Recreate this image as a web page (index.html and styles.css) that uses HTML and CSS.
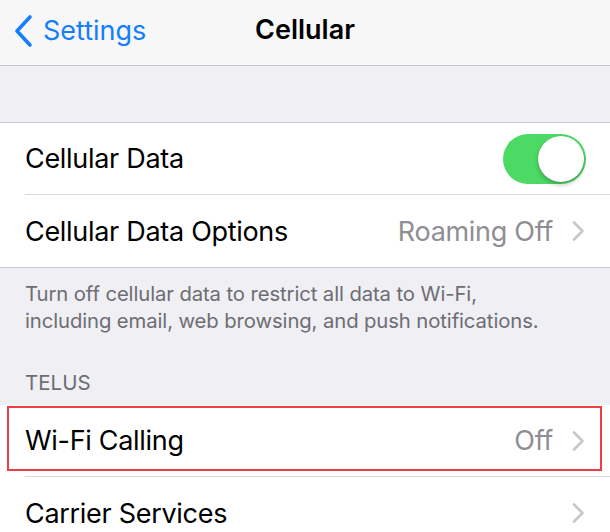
FILE: index.html
```html
<!DOCTYPE html>
<html>
<head>
<meta charset="utf-8">
<link rel="stylesheet" href="styles.css">
</head>
<body>
<div class="screen">
  <header class="nav">
    <div class="back">
      <svg class="back-icon" width="20" height="34" viewBox="0 0 20 34"><path d="M17 3 L4 17 L17 31" fill="none" stroke="#157efb" stroke-width="3.6" stroke-linecap="round" stroke-linejoin="round"/></svg>
      <span class="back-label">Settings</span>
    </div>
    <div class="title">Cellular</div>
  </header>
  <div class="spacer"></div>
  <section class="group">
    <div class="row">
      <span class="label">Cellular Data</span>
      <div class="toggle"><div class="knob"></div></div>
    </div>
    <div class="row">
      <span class="label">Cellular Data Options</span>
      <span class="value">Roaming Off</span>
      <svg class="chev" width="14" height="22" viewBox="0 0 14 22"><path d="M3 2.5 L11.5 11 L3 19.5" fill="none" stroke="#c7c7cc" stroke-width="2.6" stroke-linecap="round" stroke-linejoin="round"/></svg>
    </div>
  </section>
  <p class="footer">Turn off cellular data to restrict all data to Wi-Fi,<br>including email, web browsing, and push notifications.</p>
  <div class="header">TELUS</div>
  <section class="group">
    <div class="row highlighted">
      <span class="label">Wi-Fi Calling</span>
      <span class="value">Off</span>
      <svg class="chev" width="14" height="22" viewBox="0 0 14 22"><path d="M3 2.5 L11.5 11 L3 19.5" fill="none" stroke="#c7c7cc" stroke-width="2.6" stroke-linecap="round" stroke-linejoin="round"/></svg>
      <div class="highlight-box"></div>
    </div>
    <div class="row">
      <span class="label">Carrier Services</span>
      <svg class="chev" width="14" height="22" viewBox="0 0 14 22"><path d="M3 2.5 L11.5 11 L3 19.5" fill="none" stroke="#c7c7cc" stroke-width="2.6" stroke-linecap="round" stroke-linejoin="round"/></svg>
    </div>
  </section>
</div>
</body>
</html>
```
FILE: styles.css
```css
* { box-sizing: border-box; }
html, body { margin: 0; padding: 0; }
body {
  width: 610px;
  height: 532px;
  overflow: hidden;
  background: #efeff4;
  font-family: Inter, "Liberation Sans", sans-serif;
  -webkit-font-smoothing: antialiased;
}
.screen { display: flex; flex-direction: column; }
.nav {
  height: 66px;
  background: #f7f7f8;
  border-bottom: 1px solid #c9c9cd;
  display: flex;
  align-items: center;
  position: relative;
}
.back {
  display: flex;
  align-items: center;
  gap: 10px;
  padding-left: 13px;
  color: #157efb;
  font-size: 27px;
  margin-top: -4px;
}
.title {
  position: absolute;
  left: 0; right: 0;
  top: 13px;
  text-align: center;
  font-size: 27px;
  font-weight: 600;
  color: #000;
}
.spacer {
  height: 57px;
  border-bottom: 1px solid #c8c7cc;
}
.group {
  background: #fff;
  border-bottom: 1px solid #c8c7cc;
}
.row {
  height: 72px;
  display: flex;
  align-items: center;
  padding: 0 25px 0 0;
  margin-left: 25px;
  border-bottom: 1px solid #d9d9dd;
  position: relative;
  font-size: 27px;
  letter-spacing: -0.3px;
}
.row:last-child { border-bottom: none; }
.label { color: #000; flex: 1; }
.value { color: #8e8e93; margin-right: 18px; }
.chev { flex: none; }
.toggle {
  width: 83px;
  height: 50px;
  border-radius: 25px;
  background: #4cd964;
  position: relative;
  margin-right: -1px;
}
.knob {
  position: absolute;
  right: 2px; top: 2px;
  width: 46px; height: 46px;
  border-radius: 50%;
  background: #fff;
  box-shadow: 0 3px 4px rgba(0,0,0,0.22), 0 0 1px rgba(0,0,0,0.2);
}
.footer {
  margin: 0;
  padding: 12px 10px 0 25px;
  color: #6d6d72;
  font-size: 20.3px;
  line-height: 27px;
  letter-spacing: -0.1px;
  white-space: nowrap;
}
.header {
  padding: 35px 25px 9px 25px;
  color: #6d6d72;
  font-size: 20.5px;
  line-height: 27px;
}
.highlight-box {
  position: absolute;
  left: -18px;
  right: 8px;
  top: 1px;
  bottom: 5px;
  border: 2px solid #ef3d45;
  pointer-events: none;
}
```
